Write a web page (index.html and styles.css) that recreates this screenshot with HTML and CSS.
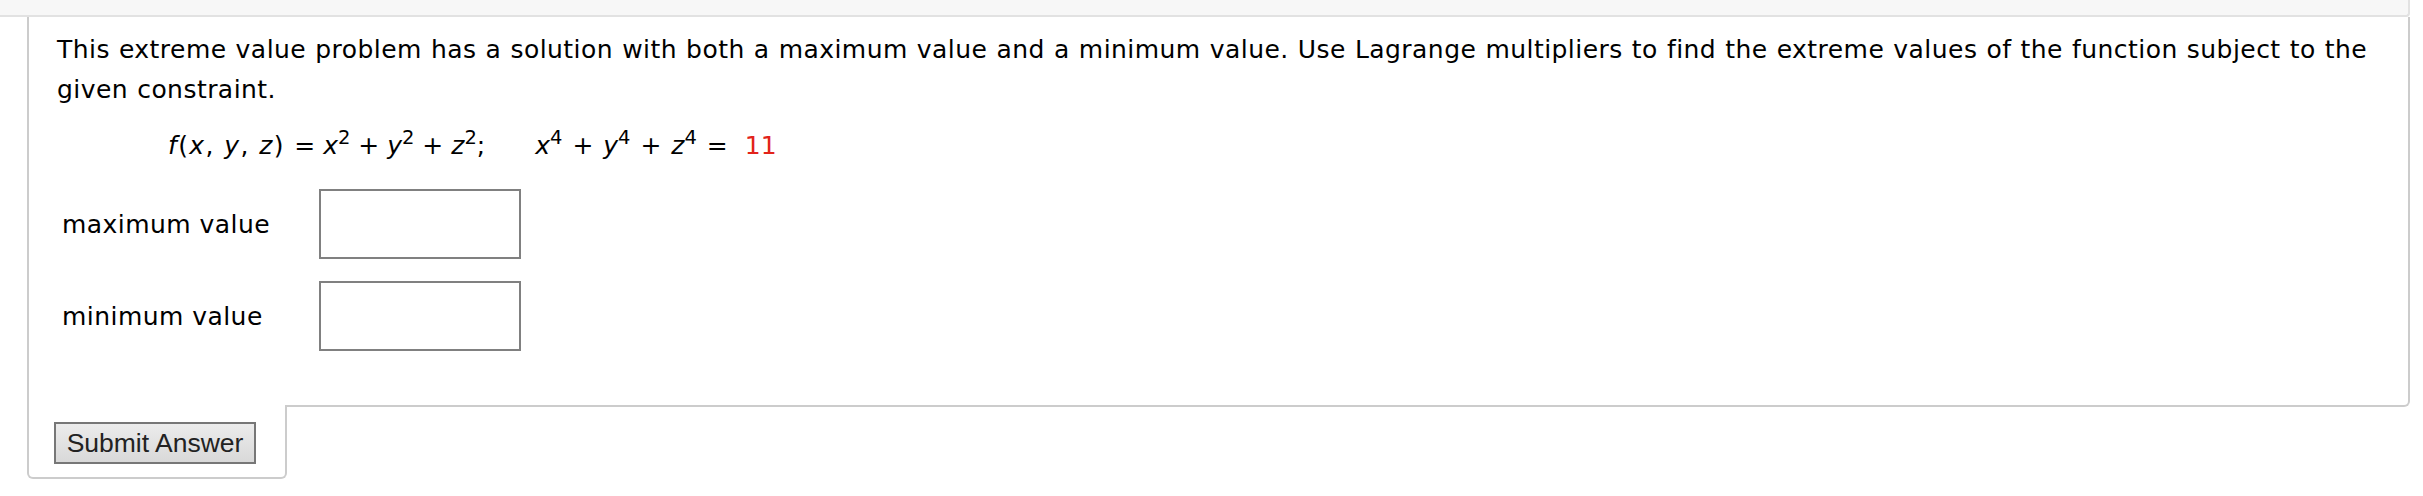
FILE: index.html
```html
<!DOCTYPE html>
<html lang="en">
<head>
    <meta charset="UTF-8">
    <title>Lagrange Multipliers</title>
    <link rel="stylesheet" href="styles.css">
</head>
<body>

    <div class="topbar"></div>

    <section class="question">
        <p class="prompt">This extreme value problem has a solution with both a maximum value and a minimum value. Use Lagrange multipliers to find the extreme values of the function subject to the given constraint.</p>

        <div class="formula">
            <span class="fn"><i>f</i>(<i>x</i>, <i>y</i>, <i>z</i>) </span>= <i>x</i><sup>2</sup> + <i>y</i><sup>2</sup> + <i>z</i><sup>2</sup>;<span class="gap"></span><span class="constraint"><i>x</i><sup>4</sup> + <i>y</i><sup>4</sup> + <i>z</i><sup>4</sup> =</span><span class="given">11</span>
        </div>

        <!-- Answer rows -->
        <div class="answer-row">
            <label class="answer-label" for="max">maximum value</label>
            <input class="answer-box" id="max" type="text">
        </div>
        <div class="answer-row">
            <label class="answer-label" for="min">minimum value</label>
            <input class="answer-box" id="min" type="text">
        </div>
    </section>

    <div class="submit-tab">
        <button class="submit">Submit Answer</button>
    </div>

</body>
</html>
```

FILE: styles.css
```css
* {
    margin: 0;
    padding: 0;
    box-sizing: border-box;
}

body {
    font-family: "DejaVu Sans", Verdana, sans-serif;
    color: #000;
    background-color: #fff;
}

.topbar {
    height: 17px;
    margin-right: 13px;
    background-color: #f7f7f7;
    border-bottom: 2px solid #e2e2e2;
    border-right: 2px solid #e2e2e2;
    border-bottom-right-radius: 4px;
}

.question {
    margin-left: 27px;
    margin-right: 13px;
    padding: 13px 14px 54px 28px;
    border-left: 2px solid #ccc;
    border-right: 2px solid #ccc;
    border-bottom: 2px solid #ccc;
    border-bottom-right-radius: 6px;
}

/* widen DejaVu a bit so it runs like Verdana */
.prompt {
    font-size: 25px;
    line-height: 40px;
    letter-spacing: 0.45px;
    word-spacing: 0.7px;
}

.formula {
    margin-top: 16px;
    padding-left: 111px;
    font-size: 25px;
    line-height: 40px;
}

.formula .fn {
    letter-spacing: 1.4px;
}

.formula .constraint {
    word-spacing: 2px;
}

.formula sup {
    font-size: 0.78em;
    line-height: 0;
    vertical-align: 0.5em;
}

.gap {
    display: inline-block;
    width: 50px;
}

.given {
    margin-left: 17px;
    color: #e2231a;
}

.answer-row {
    display: flex;
    align-items: center;
    margin-top: 22px;
}

.formula + .answer-row {
    margin-top: 23px;
}

.answer-label {
    width: 262px;
    padding-left: 5px;
    font-size: 25px;
    letter-spacing: 0.45px;
}

.answer-box {
    width: 202px;
    height: 70px;
    border: 2px solid #808080;
    background-color: #fff;
    font-size: 24px;
}

.submit-tab {
    width: 260px;
    height: 74px;
    margin-left: 27px;
    margin-top: -2px;
    padding: 17px 0 0 25px;
    background-color: #fff;
    border-left: 2px solid #ccc;
    border-right: 2px solid #ccc;
    border-bottom: 2px solid #ccc;
    border-bottom-left-radius: 6px;
    border-bottom-right-radius: 6px;
}

.submit {
    width: 202px;
    height: 42px;
    font-family: "Liberation Sans", Arial, sans-serif;
    font-size: 26.5px;
    color: #222;
    background: linear-gradient(#ececec, #d9d9d9);
    border: 2px solid #777;
}
```
